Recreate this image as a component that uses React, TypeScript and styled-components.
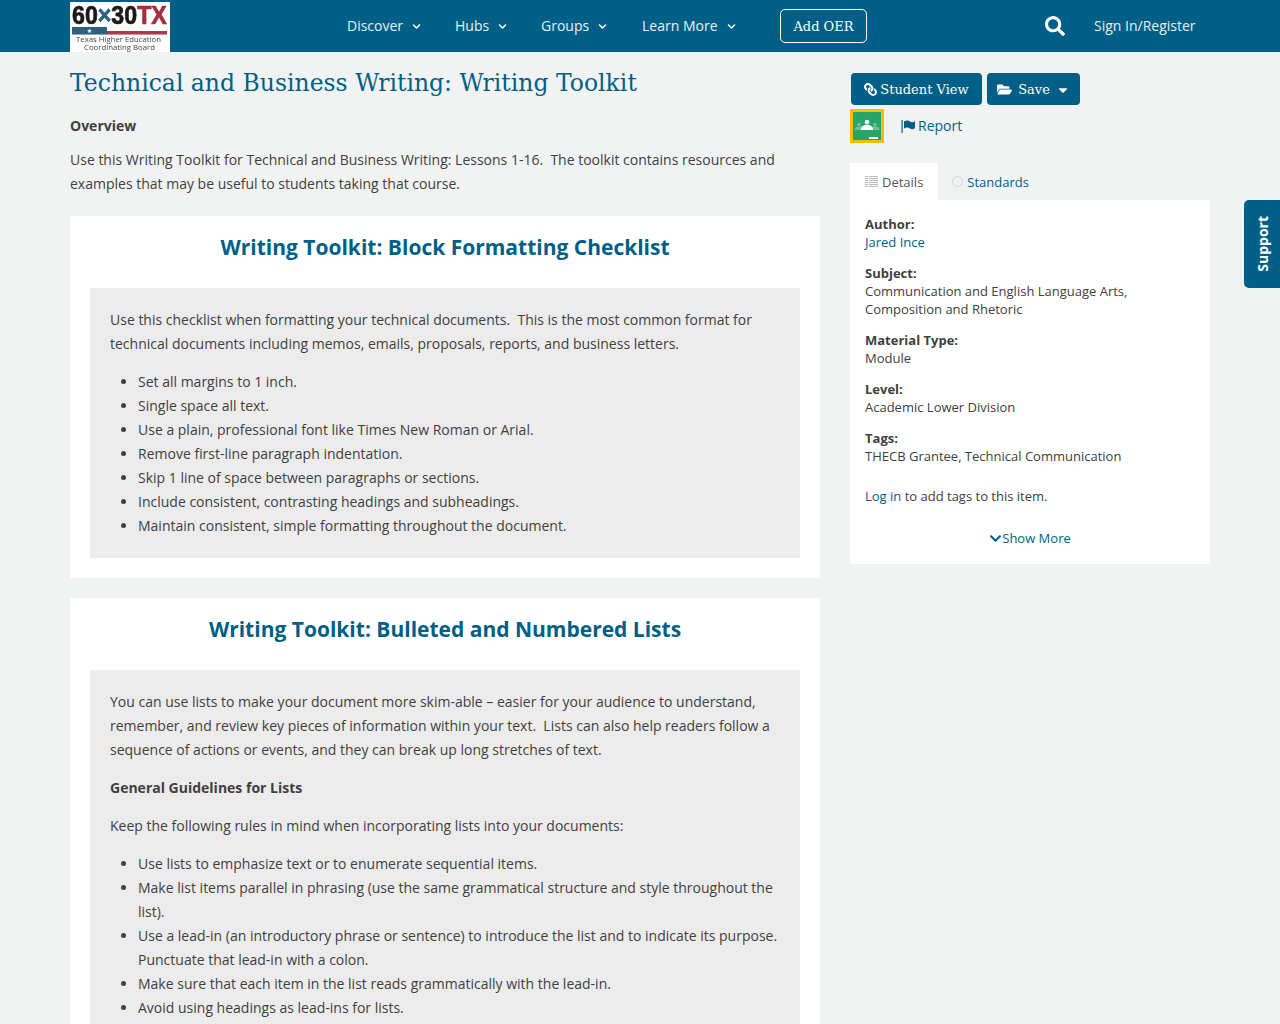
import styled, { createGlobalStyle } from "styled-components";
import { FaChevronDown, FaSearch, FaLink, FaFolderOpen, FaCaretDown } from "react-icons/fa";

const Global = createGlobalStyle`
  html, body { margin: 0; padding: 0; }
  body {
    background: #f1f3f2;
    color: #404040;
    font-family: "Open Sans", sans-serif;
    font-size: 14px;
    line-height: 24px;
    height: 1024px;
    overflow: hidden;
  }
  a { color: #005f86; text-decoration: none; }
`;

const Header = styled.header`
  height: 52px;
  background: #005f86;
  display: flex;
  align-items: center;
  padding-left: 70px;
`;
const LogoBox = styled.div`
  width: 100px;
  height: 50px;
  margin-top: 1px;
  background: #fff;
  flex: none;
`;
const LogoArt = styled.svg`
  display: block;
  filter: blur(0.3px);
`;
const Nav = styled.nav`
  display: flex;
  margin-left: 177px;
`;
const NavItem = styled.a<{ $w: number }>`
  width: ${(p) => p.$w}px;
  display: flex;
  align-items: center;
  gap: 9px;
  color: #e8f0f4;
  font-size: 14px;
  svg { font-size: 9px; color: #fff; }
`;
const AddButton = styled.a`
  box-sizing: border-box;
  width: 87px;
  height: 34px;
  margin-left: 28px;
  padding-top: 1px;
  border: 1px solid #fff;
  border-radius: 5px;
  color: #fff;
  display: flex;
  align-items: center;
  justify-content: center;
  font-family: "DejaVu Serif", serif;
  font-size: 13px;
`;
const SearchLink = styled.a`
  margin-left: 178px;
  color: #fff;
  display: flex;
  font-size: 20px;
`;
const SignIn = styled.a`
  margin-left: 29px;
  color: #e8f0f4;
  font-size: 14px;
`;

const Page = styled.div`
  display: grid;
  grid-template-columns: 750px 360px;
  column-gap: 30px;
  padding: 0 70px;
`;
const Main = styled.main`
  min-width: 0;
`;
const Title = styled.h1`
  margin: 15px 0 0;
  font-family: "DejaVu Serif", serif;
  font-weight: 400;
  font-size: 23.5px;
  line-height: 32px;
  color: #005f86;
`;
const Para = styled.p`
  margin: 0 0 14px;
`;
const Overview = styled(Para)`
  font-weight: 700;
  margin-top: 15px;
  margin-bottom: 10px;
`;
const Intro = styled(Para)`
  margin-bottom: 20px;
`;
const Card = styled.section`
  background: #fff;
  padding: 16px 20px 20px;
  margin-bottom: 20px;
`;
const CardTitle = styled.h2`
  margin: 0 0 26px;
  font-size: 21px;
  line-height: 30px;
  font-weight: 700;
  text-align: center;
  color: #005f86;
`;
const Inset = styled.div`
  background: #ececec;
  padding: 20px;
`;
const List = styled.ul`
  margin: 0;
  padding-left: 28px;
`;

const Side = styled.aside`
  padding-top: 21px;
`;
const ButtonRow = styled.div`
  display: flex;
  gap: 5px;
  padding-left: 1px;
`;
const ActionButton = styled.a<{ $w: number }>`
  box-sizing: border-box;
  width: ${(p) => p.$w}px;
  height: 32px;
  padding-top: 1px;
  background: #005f86;
  border-radius: 4px;
  color: #fff;
  display: flex;
  align-items: center;
  justify-content: center;
  font-family: "DejaVu Serif", serif;
  font-size: 13px;
`;
const LinkGlyph = styled(FaLink)`
  font-size: 13px;
  margin-right: 3px;
  transform: scaleX(-1);
`;
const FolderGlyph = styled(FaFolderOpen)`
  font-size: 15px;
  margin-right: 6px;
`;
const CaretGlyph = styled(FaCaretDown)`
  font-size: 14px;
  margin-left: 6px;
`;
const ShareRow = styled.div`
  display: flex;
  align-items: center;
  margin-top: 4px;
  height: 34px;
`;
const ClassroomIcon = styled.svg`
  width: 34px;
  height: 34px;
  flex: none;
`;
const ReportLink = styled.a`
  margin-left: 17px;
  display: flex;
  align-items: center;
  gap: 2px;
`;
const Tabs = styled.div`
  display: flex;
  margin-top: 20px;
`;
const Tab = styled.a<{ $active?: boolean }>`
  box-sizing: border-box;
  height: 37px;
  padding: 0 15px;
  display: flex;
  align-items: center;
  gap: 4px;
  font-size: 13px;
  background: ${(p) => (p.$active ? "#fff" : "transparent")};
  color: ${(p) => (p.$active ? "#555" : "#005f86")};
`;
const Radio = styled.span`
  box-sizing: border-box;
  width: 11px;
  height: 11px;
  border: 1px solid #d4d4d4;
  border-radius: 50%;
  margin-left: -1px;
`;
const DetailCard = styled.div`
  box-sizing: border-box;
  height: 364px;
  background: #fff;
  padding: 15px 15px 0;
  font-size: 13px;
  line-height: 18px;
`;
const Field = styled.div`
  margin-bottom: 13px;
`;
const Label = styled.div`
  font-weight: 700;
`;
const LoginLine = styled.div`
  margin-top: 22px;
`;
const ShowMore = styled.a`
  margin-top: 24px;
  display: flex;
  align-items: center;
  justify-content: center;
  svg { font-size: 13px; }
`;
const SupportTab = styled.a`
  position: fixed;
  right: 0;
  top: 200px;
  box-sizing: border-box;
  width: 36px;
  height: 88px;
  padding-left: 2px;
  background: #005f86;
  border-radius: 5px 0 0 5px;
  color: #fff;
  font-weight: 700;
  font-size: 14px;
  display: flex;
  align-items: center;
  justify-content: center;
  writing-mode: vertical-rl;
  span { transform: rotate(180deg); }
`;

const Logo = () => (
  <LogoArt width="100" height="50" viewBox="0 0 100 50">
    <g transform="translate(2 22) scale(0.91 1)">
      <text fontFamily="Liberation Sans, sans-serif" fontWeight="700" fontSize="25.500" stroke="#1a1a1a" strokeWidth="0.7" fill="#1a1a1a">
        60<tspan fill="#2d5f80" stroke="#2d5f80">×</tspan>30<tspan fill="#a03040" stroke="#a03040">TX</tspan>
      </text>
    </g>
    <rect x="2" y="25" width="95" height="7.500" fill="#fff" stroke="#e6e6e6" strokeWidth="0.5" />
    <rect x="37" y="29" width="60" height="3.500" fill="#a83a4c" />
    <rect x="2" y="25" width="35" height="7.500" fill="#2d5f80" />
    <polygon points="19.500,26.500 20.200,28.100 22,28.200 20.600,29.300 21.100,31 19.500,30 17.900,31 18.400,29.300 17,28.200 18.800,28.100" fill="#fff" />
    <text fontFamily="Open Sans, sans-serif" fontSize="8" fill="#444" lengthAdjust="spacingAndGlyphs">
      <tspan x="6" y="40.300" textLength="85" lengthAdjust="spacingAndGlyphs">Texas Higher Education</tspan>
      <tspan x="14" y="47.800" textLength="71" lengthAdjust="spacingAndGlyphs">Coordinating Board</tspan>
    </text>
  </LogoArt>
);

const Classroom = () => (
  <ClassroomIcon viewBox="0 0 34 34">
    <rect width="34" height="34" fill="#fbbc04" />
    <rect x="3" y="3" width="28" height="28" fill="#25a667" />
    <circle cx="9" cy="15.500" r="1.700" fill="#6cc197" />
    <circle cx="25" cy="15.500" r="1.700" fill="#6cc197" />
    <path d="M4.500 21c0-2.500 2-3.800 4.500-3.800s4.500 1.300 4.500 3.800zM20.500 21c0-2.500 2-3.800 4.500-3.800s4.500 1.300 4.500 3.800z" fill="#6cc197" />
    <circle cx="17" cy="13" r="2.300" fill="#fff" />
    <path d="M10.800 21c0-3.300 3-5.200 6.200-5.200s6.200 1.900 6.200 5.200z" fill="#fff" />
    <rect x="19" y="28" width="9" height="2" fill="#fff" />
  </ClassroomIcon>
);

const FlagGlyph = () => (
  <svg width="15" height="14" viewBox="0 0 15 14">
    <rect x="0.500" y="1" width="1.200" height="13" fill="#005f86" />
    <path d="M3 2.500c2.500-1.500 4.500-1 6 0s3 .8 5-.2v7c-2 1-3.500 1.200-5 .2s-3.500-1.500-6 0z" fill="#005f86" />
  </svg>
);

const ListGlyph = () => (
  <svg width="13" height="11" viewBox="0 0 13 11">
    {[0, 2, 4, 6, 8, 10].map((y) => (
      <rect key={y} x="0" y={y} width="13" height="1.100" fill="#bdbdbd" />
    ))}
    <rect x="3" y="0" width="0.800" height="11" fill="#fff" />
  </svg>
);

const navItems = [
  { label: "Discover", w: 108 },
  { label: "Hubs", w: 86 },
  { label: "Groups", w: 101 },
  { label: "Learn More", w: 110 },
];

const details = [
  { label: "Author:", value: <a href="#">Jared Ince</a> },
  { label: "Subject:", value: "Communication and English Language Arts, Composition and Rhetoric" },
  { label: "Material Type:", value: "Module" },
  { label: "Level:", value: "Academic Lower Division" },
  { label: "Tags:", value: "THECB Grantee, Technical Communication" },
];

const formatting = [
  "Set all margins to 1 inch.",
  "Single space all text.",
  "Use a plain, professional font like Times New Roman or Arial.",
  "Remove first-line paragraph indentation.",
  "Skip 1 line of space between paragraphs or sections.",
  "Include consistent, contrasting headings and subheadings.",
  "Maintain consistent, simple formatting throughout the document.",
];

const guidelines = [
  "Use lists to emphasize text or to enumerate sequential items.",
  "Make list items parallel in phrasing (use the same grammatical structure and style throughout the list).",
  "Use a lead-in (an introductory phrase or sentence) to introduce the list and to indicate its purpose. Punctuate that lead-in with a colon.",
  "Make sure that each item in the list reads grammatically with the lead-in.",
  "Avoid using headings as lead-ins for lists.",
];

export default function App() {
  return (
    <>
      <Global />
      <Header>
        <LogoBox>
          <Logo />
        </LogoBox>
        <Nav>
          {navItems.map((n) => (
            <NavItem key={n.label} href="#" $w={n.w}>
              {n.label}
              <FaChevronDown />
            </NavItem>
          ))}
        </Nav>
        <AddButton href="#">Add OER</AddButton>
        <SearchLink href="#">
          <FaSearch />
        </SearchLink>
        <SignIn href="#">Sign In/Register</SignIn>
      </Header>
      <Page>
        <Main>
          <Title>Technical and Business Writing: Writing Toolkit</Title>
          <Overview>Overview</Overview>
          <Intro>
            Use this Writing Toolkit for Technical and Business Writing: Lessons 1-16.&nbsp; The toolkit contains
            resources and examples that may be useful to students taking that course.
          </Intro>
          <Card>
            <CardTitle>Writing Toolkit: Block Formatting Checklist</CardTitle>
            <Inset>
              <Para>
                Use this checklist when formatting your technical documents.&nbsp; This is the most common format for
                technical documents including memos, emails, proposals, reports, and business letters.
              </Para>
              <List>
                {formatting.map((t) => (
                  <li key={t}>{t}</li>
                ))}
              </List>
            </Inset>
          </Card>
          <Card>
            <CardTitle>Writing Toolkit: Bulleted and Numbered Lists</CardTitle>
            <Inset>
              <Para>
                You can use lists to make your document more skim-able – easier for your audience to understand,
                remember, and review key pieces of information within your text.&nbsp; Lists can also help readers
                follow a sequence of actions or events, and they can break up long stretches of text.
              </Para>
              <Para>
                <strong>General Guidelines for Lists</strong>
              </Para>
              <Para>Keep the following rules in mind when incorporating lists into your documents:</Para>
              <List>
                {guidelines.map((t) => (
                  <li key={t}>{t}</li>
                ))}
              </List>
            </Inset>
          </Card>
        </Main>
        <Side>
          <ButtonRow>
            <ActionButton href="#" $w={131}>
              <LinkGlyph />
              Student View
            </ActionButton>
            <ActionButton href="#" $w={93}>
              <FolderGlyph />
              Save
              <CaretGlyph />
            </ActionButton>
          </ButtonRow>
          <ShareRow>
            <Classroom />
            <ReportLink href="#">
              <FlagGlyph />
              Report
            </ReportLink>
          </ShareRow>
          <Tabs>
            <Tab href="#" $active>
              <ListGlyph />
              Details
            </Tab>
            <Tab href="#">
              <Radio />
              Standards
            </Tab>
          </Tabs>
          <DetailCard>
            {details.map((d) => (
              <Field key={d.label}>
                <Label>{d.label}</Label>
                {d.value}
              </Field>
            ))}
            <LoginLine>
              <a href="#">Log in</a> to add tags to this item.
            </LoginLine>
            <ShowMore href="#">
              <FaChevronDown />
              Show More
            </ShowMore>
          </DetailCard>
        </Side>
      </Page>
      <SupportTab href="#">
        <span>Support</span>
      </SupportTab>
    </>
  );
}
